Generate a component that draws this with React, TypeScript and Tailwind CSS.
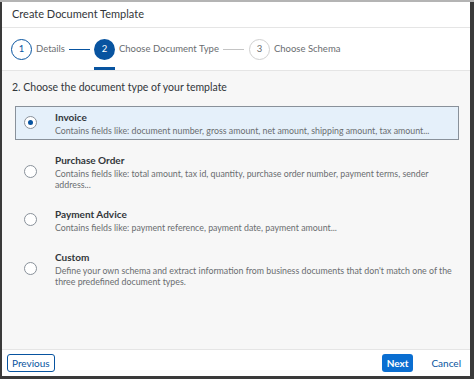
import React from "react";

const font = { fontFamily: "Lato, 'Open Sans', sans-serif" };

function Radio({ checked }: { checked?: boolean }) {
  return (
    <div className="w-[13px] h-[13px] rounded-full border border-[#89919a] bg-white flex items-center justify-center shrink-0">
      {checked && <div className="w-[5px] h-[5px] rounded-full bg-[#0854a0]" />}
    </div>
  );
}

type Opt = { title: string; desc: string; checked?: boolean };

const opts: Opt[] = [
  {
    title: "Invoice",
    desc: "Contains fields like: document number, gross amount, net amount, shipping amount, tax amount...",
    checked: true,
  },
  {
    title: "Purchase Order",
    desc: "Contains fields like: total amount, tax id, quantity, purchase order number, payment terms, sender address...",
  },
  {
    title: "Payment Advice",
    desc: "Contains fields like: payment reference, payment date, payment amount...",
  },
  {
    title: "Custom",
    desc: "Define your own schema and extract information from business documents that don't match one of the three predefined document types.",
  },
];

export default function App() {
  return (
    <div className="w-[474px] h-[379px] bg-[#3a3a3a] border-t-2 border-t-[#b4b4b4] pl-[2px] pr-[4px] pb-[3px] flex" style={font}>
      <div className="flex-1 flex flex-col bg-white">
        <div className="h-[26px] border-b border-[#e5e5e5] flex items-center px-[10px] text-[11px] text-[#32363a]">
          Create Document Template
        </div>
        <div className="h-[43px] border-b border-[#e5e5e5] flex items-start pl-[9px] pt-[11px] text-[9.5px] text-[#6a6d70]">
          <div className="flex items-center">
            <div className="w-[21px] h-[21px] rounded-full border border-[#0854a0] text-[#0854a0] flex items-center justify-center">1</div>
            <span className="ml-[4px]">Details</span>
            <div className="w-[21px] h-px bg-[#0854a0] ml-[4px]" />
          </div>
          <div className="flex flex-col ml-[4px]">
            <div className="flex items-center">
              <div className="w-[21px] h-[21px] rounded-full bg-[#0854a0] text-white flex items-center justify-center">2</div>
              <span className="ml-[4px]">Choose Document Type</span>
              <div className="w-[21px] h-px bg-[#c4c4c4] ml-[4px]" />
            </div>
            <div className="w-[21px] h-[3px] bg-[#0854a0] mt-[7px]" />
          </div>
          <div className="flex items-center ml-[5px]">
            <div className="w-[21px] h-[21px] rounded-full border border-[#d0d0d0] text-[#6a6d70] flex items-center justify-center">3</div>
            <span className="ml-[4px]">Choose Schema</span>
          </div>
        </div>
        <div className="flex-1 bg-[#f7f7f7] flex flex-col pl-[13px] pr-[11px] pt-[9px]">
          <div className="text-[10.5px] text-[#32363a] -ml-[3px]">2. Choose the document type of your template</div>
          <div className="flex flex-col mt-[10px]">
            {opts.map((o) => (
              <div
                key={o.title}
                className={
                  "flex items-center pl-[8px] pr-[6px] py-[3px] border " +
                  (o.checked ? "bg-[#e5f0fa] border-[#89919a]" : "border-transparent mt-[9px]")
                }
              >
                <Radio checked={o.checked} />
                <div className="ml-[18px] flex flex-col">
                  <div className="text-[10px] font-bold text-[#32363a] leading-[14px]">{o.title}</div>
                  <div className="text-[8.8px] text-[#6a6d70] leading-[11px] mt-[1px]">{o.desc}</div>
                </div>
              </div>
            ))}
          </div>
        </div>
        <div className="h-[27px] border-t border-[#e5e5e5] flex items-center pl-[5px] pr-[3px] text-[10px]">
          <button className="h-[18px] px-[4px] rounded-[3px] border border-[#0854a0] text-[#0854a0] bg-white">Previous</button>
          <div className="flex-1" />
          <button className="h-[18px] px-[5px] rounded-[3px] bg-[#0a6ed1] text-white font-bold">Next</button>
          <button className="h-[18px] px-[6px] ml-[12px] text-[#0854a0]">Cancel</button>
        </div>
      </div>
    </div>
  );
}
